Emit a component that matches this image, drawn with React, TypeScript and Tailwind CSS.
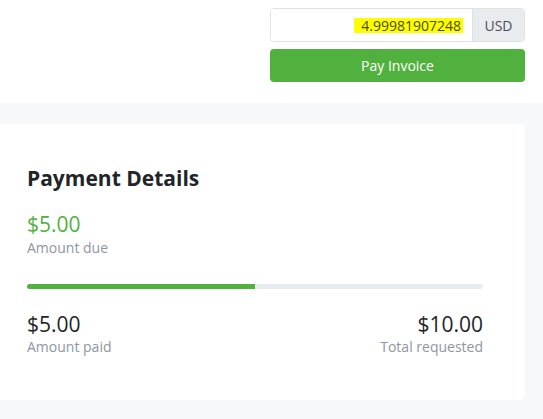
import React from "react";

export default function App() {
  const paid = 5;
  const total = 10;
  const pct = (paid / total) * 100;
  return (
    <div
      className="w-full min-h-[419px] bg-[#f7f8fa] text-[#212529]"
      style={{ fontFamily: '"Open Sans", "Noto Sans", sans-serif' }}
    >
      <div className="h-[103px] bg-white flex justify-end pr-[18px] pt-[8px]">
        <div className="w-[255px] flex flex-col gap-[7px]">
          <div className="flex h-[34px] rounded-[4px] border border-[#dee2e6] overflow-hidden">
            <div className="flex-1 flex items-center justify-end pr-[9px] bg-white">
              <span className="bg-[#ffff00] text-[14px] leading-[15px] pl-[7px] pr-[2px] text-[#4a4a00]">
                4.99981907248
              </span>
            </div>
            <div className="w-[52px] flex items-center justify-center bg-[#e9ecef] border-l border-[#dee2e6] text-[14px] text-[#495057]">
              USD
            </div>
          </div>
          <button className="h-[33px] rounded-[4px] bg-[#51b13e] text-white text-[14px] flex items-center justify-center">
            Pay Invoice
          </button>
        </div>
      </div>
      <div className="pt-[21px] pr-[18px]">
        <div className="bg-white rounded-r-[5px] pl-[27px] pr-[42px] pt-[40px] pb-[43px]">
          <h2 className="text-[21px] leading-[28px] font-bold text-[#212529]">
            Payment Details
          </h2>
          <div className="mt-[20px] text-[21px] leading-[24px] text-[#51b13e]">$5.00</div>
          <div className="mt-[2px] text-[14px] leading-[20px] text-[#8c96a1]">Amount due</div>
          <div className="mt-[26px] h-[5px] rounded-[3px] bg-[#e9ecef] overflow-hidden">
            <div className="h-full bg-[#51b13e]" style={{ width: `${pct}%` }} />
          </div>
          <div className="mt-[23px] flex justify-between">
            <div>
              <div className="text-[21px] leading-[24px]">$5.00</div>
              <div className="mt-[1px] text-[14px] leading-[20px] text-[#8c96a1]">Amount paid</div>
            </div>
            <div className="text-right">
              <div className="text-[21px] leading-[24px]">$10.00</div>
              <div className="mt-[1px] text-[14px] leading-[20px] text-[#8c96a1]">Total requested</div>
            </div>
          </div>
        </div>
      </div>
    </div>
  );
}
